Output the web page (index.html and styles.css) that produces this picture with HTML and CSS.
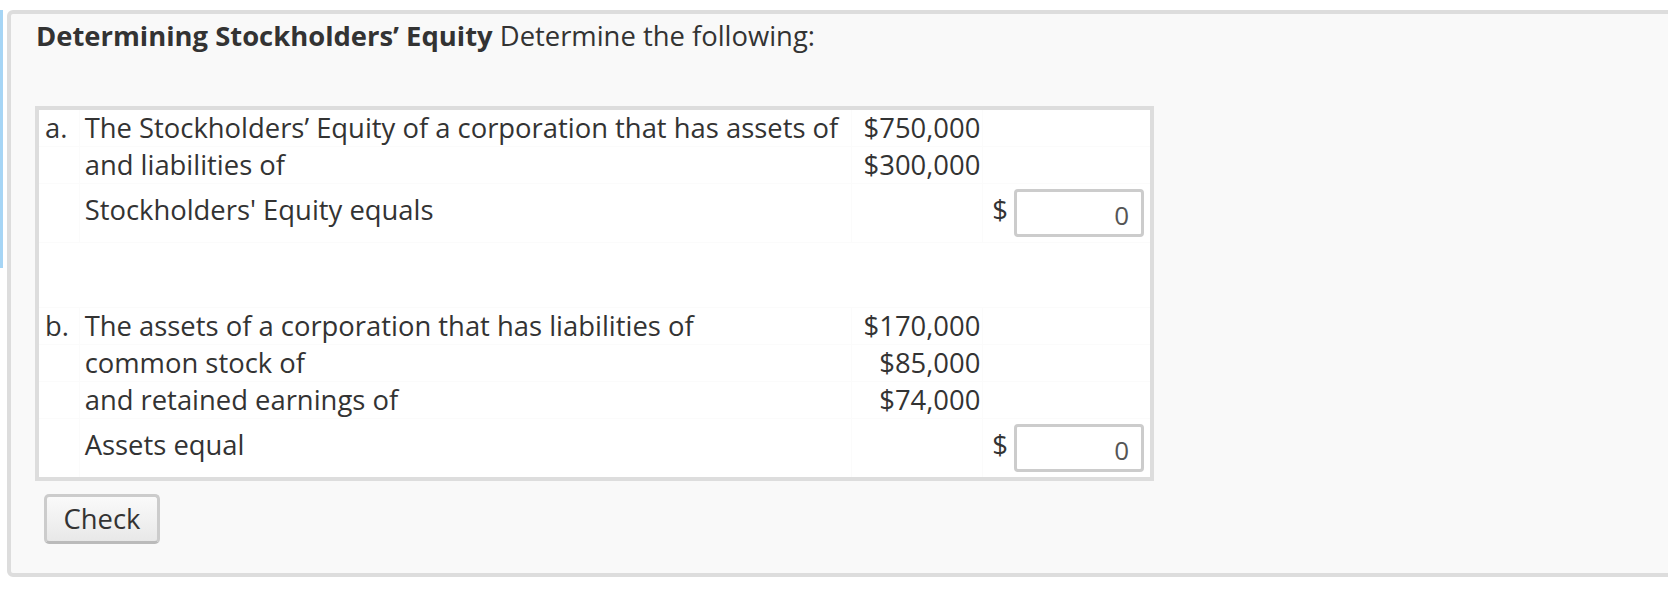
FILE: index.html
```html
<!DOCTYPE html>
<html lang="en">
<head>
  <meta charset="UTF-8" />
  <title>Determining Stockholders’ Equity</title>
  <link rel="stylesheet" href="styles.css">
</head>
<body>
  <div class="page">
    <div class="marker"></div>

    <div class="panel">
      <p class="prompt"><b>Determining Stockholders’ Equity</b> Determine the following:</p>

      <table class="problem">
        <!-- a -->
        <tr>
          <td class="label">a.</td>
          <td class="text">The Stockholders’ Equity of a corporation that has assets of</td>
          <td class="amount">$750,000</td>
          <td class="answer"></td>
        </tr>
        <tr>
          <td class="label"></td>
          <td class="text">and liabilities of</td>
          <td class="amount">$300,000</td>
          <td class="answer"></td>
        </tr>
        <tr class="result">
          <td class="label"></td>
          <td class="text">Stockholders' Equity equals</td>
          <td class="amount"></td>
          <td class="answer"><span>$</span><input type="text" value="0"></td>
        </tr>
        <tr class="spacer"><td colspan="4"></td></tr>

        <!-- b -->
        <tr>
          <td class="label">b.</td>
          <td class="text">The assets of a corporation that has liabilities of</td>
          <td class="amount">$170,000</td>
          <td class="answer"></td>
        </tr>
        <tr>
          <td class="label"></td>
          <td class="text">common stock of</td>
          <td class="amount">$85,000</td>
          <td class="answer"></td>
        </tr>
        <tr>
          <td class="label"></td>
          <td class="text">and retained earnings of</td>
          <td class="amount">$74,000</td>
          <td class="answer"></td>
        </tr>
        <tr class="result">
          <td class="label"></td>
          <td class="text">Assets equal</td>
          <td class="amount"></td>
          <td class="answer"><span>$</span><input type="text" value="0"></td>
        </tr>
      </table>

      <button class="check">Check</button>
    </div>
  </div>
</body>
</html>
```

FILE: styles.css
```css
html, body {
  margin: 0;
  padding: 0;
  background: white;
  overflow: hidden;
}

body {
  font-family: "Open Sans", "Noto Sans", sans-serif;
  font-size: 27.4px;
  line-height: 36px;
  color: #333;
}

.page {
  display: flex;
  align-items: flex-start;
  gap: 4px;
  padding-top: 10px;
}

.marker {
  flex: none;
  width: 3px;
  height: 258px;
  background: #a6d5f5;
}

.panel {
  flex: none;
  width: 1700px;
  background: #f9f9f9;
  border: 4px solid #dddddd;
  border-radius: 6px;
  padding: 4px 0 29px 24px;
}

.prompt {
  margin: 0 0 52px 1px;
}

.prompt b {
  font-weight: 700;
}

.problem {
  border-collapse: collapse;
  background: white;
  border: 4px solid #dddddd;
  width: 1119px;
}

.problem td {
  padding: 0;
  border: 1px solid #fbfbfb;
  vertical-align: middle;
  white-space: nowrap;
}

.problem .label {
  width: 35px;
  padding-left: 6px;
}

.problem .text {
  padding-left: 5px;
  width: 768px;
}

.problem .amount {
  text-align: right;
  padding-right: 2px;
  width: 130px;
}

.problem .answer {
  padding: 0 6px 0 9px;
}

.result td {
  height: 58px;
}

.result .text {
  height: 52px;
  padding-bottom: 6px;
}

.spacer td {
  height: 64px;
}

.answer span {
  margin-right: 6px;
}

.answer input {
  width: 130px;
  height: 48px;
  box-sizing: border-box;
  border: 3px solid #cccccc;
  border-radius: 4px;
  font: inherit;
  font-size: 26px;
  color: #555;
  text-align: right;
  padding: 3px 12px 0;
  vertical-align: middle;
  background: white;
}

.check {
  display: block;
  margin-top: 13px;
  margin-left: 9px;
  width: 116px;
  height: 50px;
  font: inherit;
  color: #333;
  background: linear-gradient(#fafafa, #e8e8e8);
  border: 3px solid #cccccc;
  border-bottom-color: #bbbbbb;
  border-radius: 5px;
  padding: 0;
}
```
